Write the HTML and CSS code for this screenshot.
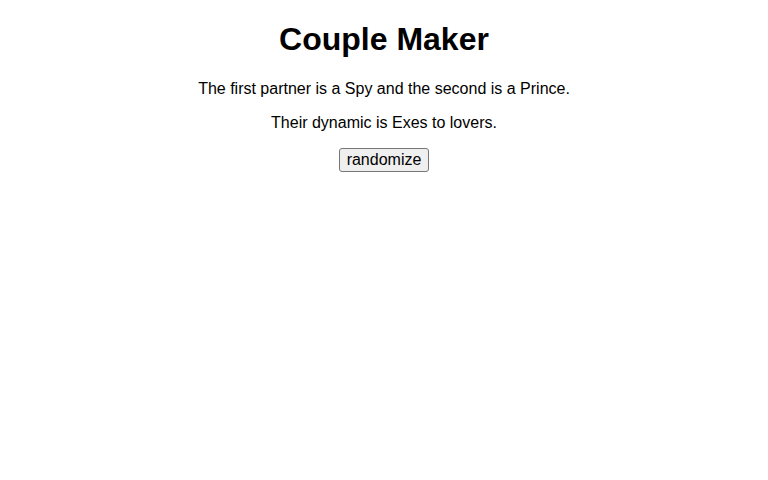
FILE: index.html
```html
<!DOCTYPE html>
<html>
<head>
<meta charset="utf-8">
<title>Couple Maker</title>
<link rel="stylesheet" href="styles.css">
</head>
<body>
<main class="app">
  <h1 class="title">Couple Maker</h1>
  <p class="line">The first partner is a Spy and the second is a Prince.</p>
  <p class="line">Their dynamic is Exes to lovers.</p>
  <button class="randomize" type="button">randomize</button>
</main>
</body>
</html>
```
FILE: styles.css
```css
body {
  margin: 8px;
  font-family: "Liberation Sans", Arial, sans-serif;
  color: #000;
  background: #fff;
}

.app {
  text-align: center;
}

.title {
  font-size: 32px;
  font-weight: bold;
  margin: 13px 0 22px;
}

.line {
  font-size: 16px;
  margin: 16px 0;
}

.randomize {
  font-family: "Liberation Sans", Arial, sans-serif;
  font-size: 16px;
  line-height: 18px;
  padding: 2px 7px;
  background: #efefef;
  border: 1px solid #767676;
  border-radius: 3px;
  color: #000;
}
```
